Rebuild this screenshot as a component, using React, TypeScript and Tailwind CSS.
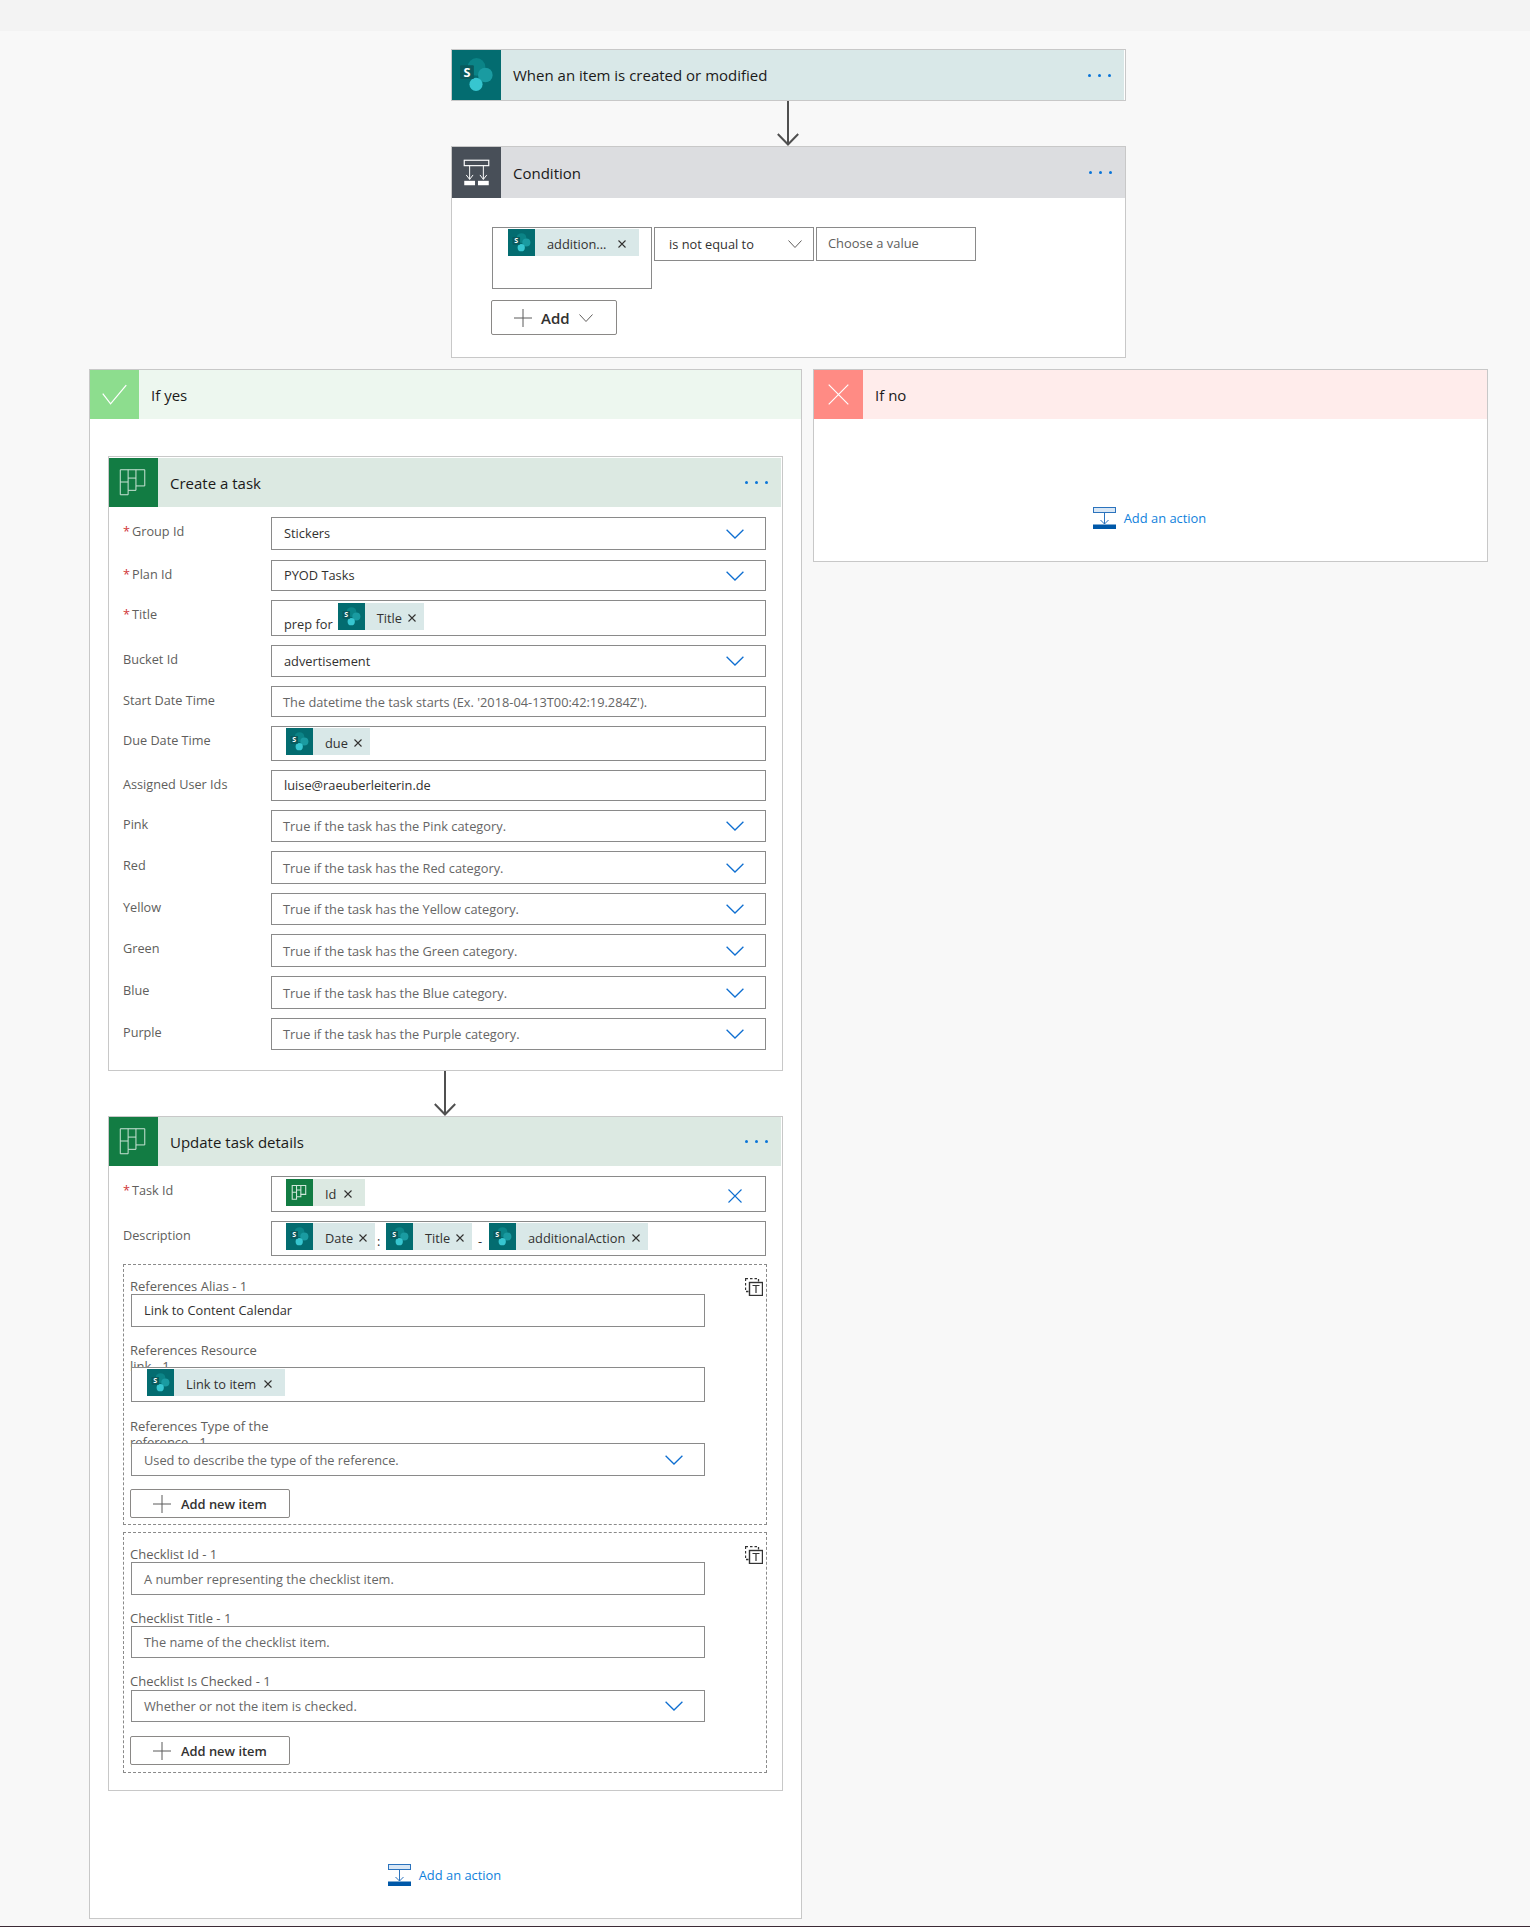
import React from "react";

const Dots = () => (
  <div className="ml-auto flex items-center gap-[7px] pr-[13px]">
    <span className="block h-[3px] w-[3px] rounded-full bg-[#0a75d8]" />
    <span className="block h-[3px] w-[3px] rounded-full bg-[#0a75d8]" />
    <span className="block h-[3px] w-[3px] rounded-full bg-[#0a75d8]" />
  </div>
);

const SharePointGlyph = () => (
  <svg viewBox="0 0 50 50" className="h-full w-full">
    <circle cx="25" cy="16.7" r="9" fill="#0b8487" />
    <circle cx="34" cy="25" r="7.5" fill="#1a9ba1" />
    <circle cx="24.5" cy="34.5" r="6.7" fill="#37c6d0" />
    <rect x="8.3" y="15" width="14" height="14" rx="1" fill="#0a5a5d" />
    <text x="15.3" y="26.8" textAnchor="middle" fontSize="13" fontWeight="700" fill="#ffffff" fontFamily="'Open Sans', sans-serif">S</text>
  </svg>
);

const PlannerGlyph = ({ stroke = 1 }: { stroke?: number }) => (
  <svg viewBox="0 0 50 50" className="h-full w-full" fill="none" stroke="#cfe6d9" strokeWidth={stroke}>
    <path d="M11.5 12H36.5V28.5H27.5V33H19.5V37.5H11.5Z" />
    <path d="M19.5 12V33M27.5 12V28.5M11.5 24.5H19.5M19.5 20.5H27.5" />
  </svg>
);

const ConditionGlyph = () => (
  <svg viewBox="0 0 50 50" className="h-full w-full" fill="none" stroke="#ffffff">
    <rect x="12.5" y="12.5" width="25" height="5.5" strokeWidth="1.2" />
    <path d="M18 18V32M32 18V32M14.5 27.5L18 32L21.5 27.5M28.5 27.5L32 32L35.5 27.5" strokeWidth="1" />
    <rect x="12.5" y="33.5" width="11" height="4.5" fill="#ffffff" stroke="none" />
    <rect x="26.5" y="33.5" width="11" height="4.5" fill="#ffffff" stroke="none" />
  </svg>
);

const Chevron = () => (
  <svg viewBox="0 0 18 10" className="h-[10px] w-[18px] shrink-0" fill="none" stroke="#0f6fd1" strokeWidth="1.3">
    <path d="M0.6 0.8L9 9L17.4 0.8" />
  </svg>
);

const Arrow = () => (
  <svg viewBox="0 0 22 45" className="h-[45px] w-[22px]" fill="none" stroke="#505050" strokeWidth="2">
    <path d="M11 0V43M0.8 33L11 43.5L21.2 33" />
  </svg>
);

const Plus = () => (
  <svg viewBox="0 0 18 18" className="h-[18px] w-[18px] shrink-0" fill="none" stroke="#5a5a5a" strokeWidth="1">
    <path d="M9 0V18M0 9H18" />
  </svg>
);

const AddIcon = () => (
  <svg viewBox="0 0 23 22" className="h-[22px] w-[23px] shrink-0">
    <rect x="0.5" y="0.5" width="22" height="5" fill="#d9e7f5" stroke="#2b73bd" />
    <path d="M11.5 6V17M7.5 13L11.5 17L15.5 13" fill="none" stroke="#2b73bd" />
    <rect x="0" y="17.5" width="23" height="4.5" fill="#0058a8" />
  </svg>
);

const TrashT = () => (
  <svg viewBox="0 0 18 18" className="h-[18px] w-[18px] shrink-0" fill="none">
    <rect x="0.5" y="0.5" width="13" height="13" stroke="#333" strokeWidth="1.3" strokeDasharray="2.5 2" />
    <rect x="4.5" y="4.5" width="13" height="13" fill="#fff" stroke="#333" strokeWidth="1.4" />
    <path d="M7.5 7.5H14.5M11 7.5V15" stroke="#333" strokeWidth="1.2" />
  </svg>
);

const Chip = ({
  label,
  planner,
  className,
  xCls = "mr-[8px]",
}: {
  label: string;
  planner?: boolean;
  className: string;
  xCls?: string;
}) => (
  <div className={"flex h-[27px] shrink-0 items-center " + (planner ? "bg-[#dce9e2] " : "bg-[#d9e8e8] ") + className}>
    <div className={"h-[27px] w-[27px] shrink-0 " + (planner ? "bg-[#127c43]" : "bg-[#036c70]")}>
      {planner ? <PlannerGlyph stroke={2} /> : <SharePointGlyph />}
    </div>
    <span className="ml-[12px] pt-[3px] text-[12.8px] leading-none text-[#323130]">{label}</span>
    <svg viewBox="0 0 8 8" className={"ml-auto mt-[2px] h-[8px] w-[8px] shrink-0 " + xCls} fill="none" stroke="#323130" strokeWidth="1.1">
      <path d="M0.5 0.5L7.5 7.5M7.5 0.5L0.5 7.5" />
    </svg>
  </div>
);

const Box = ({ className, children }: { className: string; children?: React.ReactNode }) => (
  <div className={"relative flex items-center border border-[#8a8a8a] bg-white " + className}>{children}</div>
);

const Val = ({ children }: { children: React.ReactNode }) => (
  <span className="pl-[12px] pt-[1px] text-[12.8px] text-[#323130]">{children}</span>
);
const Ph = ({ children, className = "pl-[11px]" }: { children: React.ReactNode; className?: string }) => (
  <span className={"pt-[2px] text-[12.8px] text-[#666666] " + className}>{children}</span>
);

const DropChevron = () => (
  <div className="ml-auto pr-[21px]">
    <Chevron />
  </div>
);

const Row = ({
  label,
  req,
  className,
  children,
  box,
}: {
  label: string;
  req?: boolean;
  className: string;
  box: string;
  children?: React.ReactNode;
}) => (
  <div className={"flex pl-[14px] " + className}>
    <div className="w-[148px] shrink-0 pt-[5px] text-[12.7px] leading-[18px] text-[#605e5c]">
      {req && <span className="mr-[2px] text-[#d13438]">*</span>}
      {label}
    </div>
    <Box className={"w-[495px] " + box}>{children}</Box>
  </div>
);

const Header = ({
  title,
  icon,
  iconBg,
  bg,
  className,
  dots = true,
}: {
  title: string;
  icon: React.ReactNode;
  iconBg: string;
  bg: string;
  className: string;
  dots?: boolean;
}) => (
  <div className={"flex items-center " + bg + " " + className}>
    <div className={"h-full w-[49px] shrink-0 " + iconBg}>{icon}</div>
    <span className="ml-[12px] pt-[1px] text-[15px] leading-none text-[#1b1a19]">{title}</span>
    {dots && <Dots />}
  </div>
);

const Btn = ({ className }: { className: string }) => (
  <div className={"ml-[-1px] flex h-[29px] w-[160px] items-center rounded-[2px] border border-[#8a8886] bg-white pl-[22px] " + className}>
    <Plus />
    <span className="ml-[10px] pt-[2px] text-[12.9px] font-semibold text-[#323130]">Add new item</span>
  </div>
);

const SubLabel = ({ className, children }: { className: string; children: React.ReactNode }) => (
  <div className={"ml-[-1px] text-[13px] leading-[16px] text-[#605e5c] " + className}>{children}</div>
);

const AddAction = ({ className }: { className: string }) => (
  <div className={"flex items-center justify-center pr-[2px] " + className}>
    <AddIcon />
    <span className="ml-[8px] pt-[2px] text-[12.9px] text-[#0f7fdc]">Add an action</span>
  </div>
);

const categories = [
  { label: "Pink", box: "h-[32px]" },
  { label: "Red", box: "h-[33px]" },
  { label: "Yellow", box: "h-[32px]" },
  { label: "Green", box: "h-[33px]" },
  { label: "Blue", box: "h-[33px]" },
  { label: "Purple", box: "h-[32px]" },
];

export default function App() {
  return (
    <div
      className="flex h-[1927px] w-[1530px] flex-col overflow-hidden bg-[#f8f8f8]"
      style={{ fontFamily: "'Open Sans', 'Noto Sans', sans-serif" }}
    >
      <div className="h-[31px] shrink-0 bg-[#f3f3f3]" />

      {/* Trigger */}
      <div className="ml-[451px] mt-[18px] h-[52px] w-[675px] shrink-0 border border-[#c8c8c8] bg-white pr-[1px]">
        <Header
          title="When an item is created or modified"
          icon={<SharePointGlyph />}
          iconBg="bg-[#036c70]"
          bg="bg-[#d9e8e8]"
          className="h-full"
        />
      </div>

      <div className="ml-[450px] flex h-[45px] w-[675px] shrink-0 justify-center">
        <Arrow />
      </div>

      {/* Condition */}
      <div className="ml-[451px] h-[212px] w-[675px] shrink-0 border border-[#c8c8c8] bg-white">
        <Header title="Condition" icon={<ConditionGlyph />} iconBg="bg-[#484f58]" bg="bg-[#dcdde0]" className="h-[51px]" />
        <div className="ml-[40px] mt-[29px] flex items-start gap-[2px]">
          <div className="h-[62px] w-[160px] border border-[#8a8a8a] bg-white pl-[15px] pt-[1px]">
            <Chip label="addition..." className="w-[131px]" xCls="mr-[13px]" />
          </div>
          <div className="flex h-[34px] w-[160px] items-center border border-[#8a8a8a] bg-white pl-[14px] pr-[11px]">
            <span className="pt-[2px] text-[12.8px] text-[#323130]">is not equal to</span>
            <svg viewBox="0 0 14 8" className="ml-auto h-[8px] w-[14px]" fill="none" stroke="#605e5c" strokeWidth="1">
              <path d="M0.5 0.5L7 7.5L13.5 0.5" />
            </svg>
          </div>
          <div className="flex h-[34px] w-[160px] items-center border border-[#8a8a8a] bg-white pl-[11px]">
            <span className="text-[12.9px] text-[#605e5c]">Choose a value</span>
          </div>
        </div>
        <div className="ml-[39px] mt-[11px] flex h-[35px] w-[126px] items-center rounded-[2px] border border-[#8a8886] bg-white pl-[22px]">
          <Plus />
          <span className="ml-[9px] pt-[1px] text-[15px] font-semibold text-[#323130]">Add</span>
          <svg viewBox="0 0 14 8" className="ml-[9px] h-[8px] w-[14px]" fill="none" stroke="#605e5c" strokeWidth="1">
            <path d="M0.5 0.5L7 7.5L13.5 0.5" />
          </svg>
        </div>
      </div>

      {/* Branches */}
      <div className="ml-[89px] mt-[11px] flex shrink-0 items-start">
        {/* If yes */}
        <div className="h-[1550px] w-[713px] border border-[#c8c8c8] bg-white">
          <Header
            title="If yes"
            icon={
              <svg viewBox="0 0 50 50" className="h-full w-full" fill="none" stroke="#ffffff" strokeWidth="1.3">
                <path d="M13 24L21 34.5L37 15.5" />
              </svg>
            }
            iconBg="bg-[#8ddd8e]"
            bg="bg-[#edf7ef]"
            className="h-[49px]"
            dots={false}
          />

          {/* Create a task */}
          <div className="ml-[18px] mt-[37px] h-[615px] w-[675px] border border-[#c8c8c8] bg-white pr-[1px] pt-[1px]">
            <Header title="Create a task" icon={<PlannerGlyph />} iconBg="bg-[#127c43]" bg="bg-[#dce9e2]" className="h-[49px]" />
            <Row label="Group Id" req className="mt-[10px]" box="h-[33px]">
              <Val>Stickers</Val>
              <DropChevron />
            </Row>
            <Row label="Plan Id" req className="mt-[10px]" box="h-[31px]">
              <Val>PYOD Tasks</Val>
              <DropChevron />
            </Row>
            <Row label="Title" req className="mt-[9px]" box="h-[36px] items-start">
              <span className="pl-[12px] pt-[14px] text-[12.8px] leading-[18px] text-[#323130]">prep for</span>
              <Chip label="Title" className="ml-[5px] mt-[2px] w-[86px]" />
            </Row>
            <Row label="Bucket Id" className="mt-[9px]" box="h-[32px]">
              <Val>advertisement</Val>
              <DropChevron />
            </Row>
            <Row label="Start Date Time" className="mt-[9px]" box="h-[31px]">
              <Ph>The datetime the task starts (Ex. '2018-04-13T00:42:19.284Z').</Ph>
            </Row>
            <Row label="Due Date Time" className="mt-[9px]" box="h-[35px] items-start pl-[14px] pt-[1px]">
              <Chip label="due" className="w-[84px]" />
            </Row>
            <Row label="Assigned User Ids" className="mt-[9px]" box="h-[31px]">
              <Val>luise@raeuberleiterin.de</Val>
            </Row>
            {categories.map((c) => (
              <Row key={c.label} label={c.label} className="mt-[9px]" box={c.box}>
                <Ph>{`True if the task has the ${c.label} category.`}</Ph>
                <DropChevron />
              </Row>
            ))}
          </div>

          <div className="ml-[17px] flex h-[45px] w-[675px] justify-center">
            <Arrow />
          </div>

          {/* Update task details */}
          <div className="ml-[18px] h-[675px] w-[675px] border border-[#c8c8c8] bg-white pr-[1px]">
            <Header title="Update task details" icon={<PlannerGlyph />} iconBg="bg-[#127c43]" bg="bg-[#dce9e2]" className="h-[49px]" />
            <Row label="Task Id" req className="mt-[10px]" box="h-[36px] items-start pl-[14px] pt-[2px]">
              <Chip planner label="Id" className="w-[79px]" xCls="mr-[13px]" />
              <svg viewBox="0 0 14 14" className="ml-auto mr-[23px] mt-[10px] h-[14px] w-[14px]" fill="none" stroke="#0f6fd1" strokeWidth="1.1">
                <path d="M0.5 0.5L13.5 13.5M13.5 0.5L0.5 13.5" />
              </svg>
            </Row>
            <Row label="Description" className="mt-[9px]" box="h-[35px] items-start pl-[14px] pt-[1px]">
              <Chip label="Date" className="w-[89px]" />
              <span className="ml-[2px] mt-[9px] w-[9px] text-[12.8px] text-[#323130]">:</span>
              <Chip label="Title" className="w-[86px]" />
              <span className="ml-[6px] mt-[9px] w-[11px] text-[12.8px] text-[#323130]">-</span>
              <Chip label="additionalAction" className="w-[159px]" xCls="mr-[8px]" />
            </Row>

            {/* References */}
            <div className="ml-[14px] mt-[8px] flex h-[261px] w-[644px] border border-dashed border-[#8a8a8a] pl-[7px]">
              <div className="w-[574px] shrink-0 pt-[13px]">
                <SubLabel className="h-[16px]">References Alias - 1</SubLabel>
                <Box className="h-[33px]">
                  <Val>Link to Content Calendar</Val>
                </Box>
                <SubLabel className="mt-[15px] h-[25px]">
                  References Resource
                  <br />
                  link - 1
                </SubLabel>
                <Box className="h-[35px] items-start pl-[15px] pt-[1px]">
                  <Chip label="Link to item" className="w-[138px]" xCls="mr-[13px]" />
                </Box>
                <SubLabel className="mt-[16px] h-[25px]">
                  References Type of the
                  <br />
                  reference - 1
                </SubLabel>
                <Box className="h-[33px]">
                  <Ph className="pl-[12px]">Used to describe the type of the reference.</Ph>
                  <DropChevron />
                </Box>
                <Btn className="mt-[13px]" />
              </div>
              <div className="ml-[40px] mt-[13px]">
                <TrashT />
              </div>
            </div>

            {/* Checklist */}
            <div className="ml-[14px] mt-[7px] flex h-[241px] w-[644px] border border-dashed border-[#8a8a8a] pl-[7px]">
              <div className="w-[574px] shrink-0 pt-[13px]">
                <SubLabel className="h-[16px]">Checklist Id - 1</SubLabel>
                <Box className="h-[33px]">
                  <Ph className="pl-[12px]">A number representing the checklist item.</Ph>
                </Box>
                <SubLabel className="mt-[15px] h-[16px]">Checklist Title - 1</SubLabel>
                <Box className="h-[32px]">
                  <Ph className="pl-[12px]">The name of the checklist item.</Ph>
                </Box>
                <SubLabel className="mt-[15px] h-[17px]">Checklist Is Checked - 1</SubLabel>
                <Box className="h-[32px]">
                  <Ph className="pl-[12px]">Whether or not the item is checked.</Ph>
                  <DropChevron />
                </Box>
                <Btn className="mt-[14px]" />
              </div>
              <div className="ml-[40px] mt-[13px]">
                <TrashT />
              </div>
            </div>
          </div>

          <AddAction className="mt-[73px]" />
        </div>

        {/* If no */}
        <div className="ml-[11px] h-[193px] w-[675px] border border-[#c8c8c8] bg-white">
          <Header
            title="If no"
            icon={
              <svg viewBox="0 0 50 50" className="h-full w-full" fill="none" stroke="#ffffff" strokeWidth="1.2">
                <path d="M15 15L35 35M35 15L15 35" />
              </svg>
            }
            iconBg="bg-[#ff8b84]"
            bg="bg-[#ffeceb]"
            className="h-[49px]"
            dots={false}
          />
          <AddAction className="mt-[88px]" />
        </div>
      </div>

      <div className="mt-[7px] h-[1px] shrink-0 bg-[#3b2a35]" />
    </div>
  );
}
